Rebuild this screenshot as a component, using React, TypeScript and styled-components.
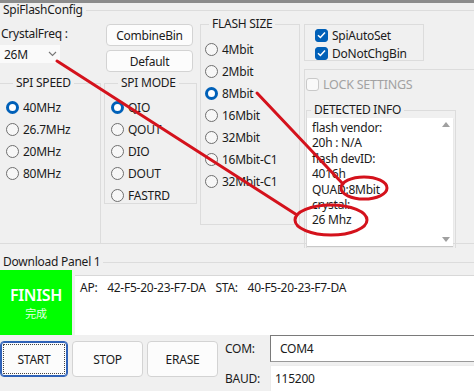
import React from "react";
import styled, { createGlobalStyle } from "styled-components";

const GlobalStyle = createGlobalStyle`
  html, body { margin: 0; padding: 0; background: #f0f0f0; }
  body { font-family: "Noto Sans", "Noto Sans CJK SC", sans-serif; }
`;

const Window = styled.div`
  position: relative;
  width: 474px;
  height: 391px;
  overflow: hidden;
  background: #f0f0f0;
  color: #1b1b1b;
  font-size: 12px;
  letter-spacing: -0.25px;
`;

const TopStrip = styled.div`
  height: 3px;
  background: #8c8c8c;
`;

const Group = styled.fieldset<{ $w?: number; $h?: number }>`
  box-sizing: border-box;
  margin: 0;
  padding: 0;
  min-width: 0;
  border: 1px solid #dcdcdc;
  ${(p) => (p.$w ? `width: ${p.$w}px;` : "")}
  ${(p) => (p.$h ? `height: ${p.$h}px;` : "")}
`;

const Legend = styled.legend<{ $indent?: number }>`
  padding: 0 3px;
  margin-left: ${(p) => p.$indent ?? 0}px;
  font-size: 12px;
  line-height: 14px;
  color: #1b1b1b;
`;

const ConfigGroup = styled(Group)`
  height: 241px;
  border-left: none;
  border-right: none;
`;

const ConfigBody = styled.div`
  display: flex;
`;

const LeftPane = styled.div`
  width: 200px;
  display: flex;
  flex-direction: column;
`;

const TopRow = styled.div`
  display: flex;
  height: 55px;
`;

const CrystalBlock = styled.div`
  width: 106px;
  padding-top: 9px;
`;

const FieldLabel = styled.div`
  line-height: 16px;
  padding-left: 1px;
`;

const Select = styled.div`
  margin-top: 3px;
  width: 60px;
  height: 18px;
  box-sizing: border-box;
  background: #fafafa;
  display: flex;
  align-items: center;
  justify-content: space-between;
  padding: 0 3px 0 4px;
`;

const ButtonStack = styled.div`
  padding-top: 7px;
  display: flex;
  flex-direction: column;
  gap: 4px;
`;

const Button = styled.button<{ $w: number; $h: number; $focus?: boolean }>`
  box-sizing: border-box;
  width: ${(p) => p.$w}px;
  height: ${(p) => p.$h}px;
  margin: 0;
  padding: 0;
  font-family: "Noto Sans", sans-serif;
  font-size: 12px;
  letter-spacing: -0.25px;
  color: #1b1b1b;
  background: #fcfcfc;
  border: 1px solid ${(p) => (p.$focus ? "#2f62b8" : "#d3d3d3")};
  border-radius: 4px;
  ${(p) =>
    p.$focus
      ? "outline: 1px dotted #444; outline-offset: -4px; box-shadow: inset 0 0 0 1px #2f62b8;"
      : ""}
`;

const GroupsRow = styled.div`
  display: flex;
  align-items: flex-start;
  margin-top: 4px;
  gap: 3px;
`;

const SpeedGroup = styled(Group)`
  border-left: none;
  border-bottom: none;
  height: 168px;
  padding: 6px 0 0 6px;
`;

const ModeGroup = styled(Group)`
  padding: 6px 0 0 6px;
`;

const FlashGroup = styled(Group)`
  padding: 7px 0 0 4px;
`;

const RadioRow = styled.div`
  display: flex;
  align-items: center;
  gap: 4px;
  height: 22px;
  white-space: nowrap;
`;

const RadioDot = styled.span<{ $on?: boolean }>`
  box-sizing: border-box;
  flex: none;
  width: 13px;
  height: 13px;
  border-radius: 50%;
  border: ${(p) => (p.$on ? "3.5px solid #0060b8" : "1px solid #6f6f6f")};
  background: ${(p) => (p.$on ? "#ffffff" : "#f7f7f7")};
`;

const RightPane = styled.div`
  flex: 1;
  margin-left: 4px;
  display: flex;
  flex-direction: column;
`;

const CheckGroup = styled.div`
  margin-top: 7px;
  width: 120px;
  height: 37px;
  box-sizing: border-box;
  border: 1px solid #dcdcdc;
  padding: 2px 0 0 10px;
  display: flex;
  flex-direction: column;
  gap: 2px;
`;

const CheckRow = styled.div<{ $disabled?: boolean }>`
  display: flex;
  align-items: center;
  gap: 4px;
  height: 16px;
  color: ${(p) => (p.$disabled ? "#a2a2a2" : "#1b1b1b")};
  font-size: ${(p) => (p.$disabled ? 12.5 : 12)}px;
`;

const CheckBox = styled.span<{ $on?: boolean }>`
  box-sizing: border-box;
  flex: none;
  width: 13px;
  height: 13px;
  border-radius: 3px;
  display: flex;
  align-items: center;
  justify-content: center;
  background: ${(p) => (p.$on ? "#0060b8" : "#f9f9f9")};
  border: 1px solid ${(p) => (p.$on ? "#0060b8" : "#c9c9c9")};
`;

const LockGroup = styled.div`
  margin-top: 8px;
  border-top: 1px solid #dcdcdc;
  border-left: 1px solid #dcdcdc;
  padding: 6px 0 0 1px;
  flex: 1;
`;

const DetectedGroup = styled(Group)`
  margin-top: 11px;
  width: 150px;
  height: 145px;
  border-bottom: none;
`;

const InfoBox = styled.div`
  position: relative;
  box-sizing: border-box;
  width: 146px;
  height: 128px;
  margin-top: 1px;
  background: #ffffff;
  box-shadow: 0 1px 1px #c8c8c8;
  padding: 2px 0 0 5px;
  line-height: 15.4px;
`;

const ScrollTrack = styled.div`
  position: absolute;
  right: 2px;
  top: 4px;
  bottom: 4px;
  width: 10px;
  display: flex;
  flex-direction: column;
  justify-content: space-between;
  align-items: center;
`;

const Arrow = styled.span<{ $down?: boolean }>`
  width: 0;
  height: 0;
  border-left: 4px solid transparent;
  border-right: 4px solid transparent;
  ${(p) => (p.$down ? "border-top: 5px solid #a0a0a0;" : "border-bottom: 5px solid #a0a0a0;")}
`;

const DownloadGroup = styled(Group)`
  margin-top: 11px;
  border-left: none;
  border-right: none;
  border-bottom: none;
  height: 140px;
`;

const StatusRow = styled.div`
  display: flex;
  align-items: flex-start;
  gap: 3px;
  margin-top: 1px;
`;

const FinishBox = styled.div`
  width: 72px;
  height: 65px;
  background: #00ff00;
  color: #ffffff;
  display: flex;
  flex-direction: column;
  align-items: center;
  justify-content: center;
`;

const FinishTitle = styled.div`
  font-size: 16px;
  font-weight: 600;
  line-height: 20px;
  letter-spacing: -0.3px;
`;

const FinishSub = styled.div`
  font-family: "Noto Sans CJK SC", sans-serif;
  font-size: 11px;
  line-height: 16px;
  opacity: 0.9;
`;

const LogBox = styled.div`
  flex: 1;
  box-sizing: border-box;
  height: 60px;
  margin-top: 5px;
  background: #ffffff;
  border-top: 1px solid #d8d8d8;
  padding: 3px 0 0 5px;
  word-spacing: 2px;
  white-space: pre;
`;

const ControlRow = styled.div`
  display: flex;
  align-items: flex-start;
  margin-top: 6px;
  gap: 4px;
`;

const PortGrid = styled.div`
  flex: 1;
  display: grid;
  grid-template-columns: 45px 1fr;
  margin-left: 3px;
  margin-top: -6px;
  row-gap: 3px;
`;

const PortLabel = styled.div`
  height: 27px;
  line-height: 27px;
`;

const PortField = styled.div<{ $flat?: boolean }>`
  box-sizing: border-box;
  height: 27px;
  line-height: 25px;
  padding-left: ${(p) => (p.$flat ? 4 : 9)}px;
  background: #ffffff;
  border: 1px solid ${(p) => (p.$flat ? "#ececec" : "#9a9a9a")};
  border-right: none;
  ${(p) => (p.$flat ? "" : "border-top-color: #7a7a7a; border-left-color: #7a7a7a;")}
`;

const Overlay = styled.svg`
  position: absolute;
  left: 0;
  top: 0;
  pointer-events: none;
`;

const speeds = ["40MHz", "26.7MHz", "20MHz", "80MHz"];
const modes = ["QIO", "QOUT", "DIO", "DOUT", "FASTRD"];
const sizes = ["4Mbit", "2Mbit", "8Mbit", "16Mbit", "32Mbit", "16Mbit-C1", "32Mbit-C1"];
const info = ["flash vendor:", "20h : N/A", "flash devID:", "4016h", "QUAD:8Mbit", "crystal:", "26 Mhz"];

const Tick = () => (
  <svg width="9" height="8" viewBox="0 0 9 8">
    <path d="M1 4.2 L3.4 6.5 L8 1.5" stroke="#fff" strokeWidth="1.5" fill="none" />
  </svg>
);

const RadioList = ({ items, selected }: { items: string[]; selected: string }) => (
  <>
    {items.map((t) => (
      <RadioRow key={t}>
        <RadioDot $on={t === selected} />
        {t}
      </RadioRow>
    ))}
  </>
);

export default function App() {
  return (
    <Window>
      <GlobalStyle />
      <TopStrip />
      <ConfigGroup>
        <Legend>SpiFlashConfig</Legend>
        <ConfigBody>
          <LeftPane>
            <TopRow>
              <CrystalBlock>
                <FieldLabel>CrystalFreq :</FieldLabel>
                <Select>
                  26M
                  <svg width="9" height="6" viewBox="0 0 9 6">
                    <path d="M1 1 L4.5 4.5 L8 1" stroke="#777" strokeWidth="1.1" fill="none" />
                  </svg>
                </Select>
              </CrystalBlock>
              <ButtonStack>
                <Button $w={87} $h={22}>CombineBin</Button>
                <Button $w={87} $h={22}>Default</Button>
              </ButtonStack>
            </TopRow>
            <GroupsRow>
              <SpeedGroup $w={101}>
                <Legend $indent={7}>SPI SPEED</Legend>
                <RadioList items={speeds} selected="40MHz" />
              </SpeedGroup>
              <ModeGroup $w={93} $h={128}>
                <Legend $indent={7}>SPI MODE</Legend>
                <RadioList items={modes} selected="QIO" />
              </ModeGroup>
            </GroupsRow>
          </LeftPane>
          <FlashGroup $w={100} $h={208}>
            <Legend $indent={4}>FLASH SIZE</Legend>
            <RadioList items={sizes} selected="8Mbit" />
          </FlashGroup>
          <RightPane>
            <CheckGroup>
              <CheckRow>
                <CheckBox $on>
                  <Tick />
                </CheckBox>
                SpiAutoSet
              </CheckRow>
              <CheckRow>
                <CheckBox $on>
                  <Tick />
                </CheckBox>
                DoNotChgBin
              </CheckRow>
            </CheckGroup>
            <LockGroup>
              <CheckRow $disabled>
                <CheckBox />
                LOCK SETTINGS
              </CheckRow>
              <DetectedGroup>
                <Legend $indent={4}>DETECTED INFO</Legend>
                <InfoBox>
                  {info.map((l) => (
                    <div key={l}>{l}</div>
                  ))}
                  <ScrollTrack>
                    <Arrow />
                    <Arrow $down />
                  </ScrollTrack>
                </InfoBox>
              </DetectedGroup>
            </LockGroup>
          </RightPane>
        </ConfigBody>
      </ConfigGroup>
      <DownloadGroup>
        <Legend>Download Panel 1</Legend>
        <StatusRow>
          <FinishBox>
            <FinishTitle>FINISH</FinishTitle>
            <FinishSub>完成</FinishSub>
          </FinishBox>
          <LogBox>{"AP:  42-F5-20-23-F7-DA  STA:  40-F5-20-23-F7-DA"}</LogBox>
        </StatusRow>
        <ControlRow>
          <Button $w={68} $h={36} $focus>START</Button>
          <Button $w={71} $h={36}>STOP</Button>
          <Button $w={71} $h={36}>ERASE</Button>
          <PortGrid>
            <PortLabel>COM:</PortLabel>
            <PortField>COM4</PortField>
            <PortLabel>BAUD:</PortLabel>
            <PortField $flat>115200</PortField>
          </PortGrid>
        </ControlRow>
      </DownloadGroup>
      <Overlay width="474" height="391" viewBox="0 0 474 391">
        <g stroke="#d4121c" strokeWidth="3" fill="none" strokeLinecap="round">
          <line x1="57" y1="61" x2="297" y2="215" />
          <line x1="257" y1="93" x2="343" y2="184" />
          <ellipse cx="331" cy="220" rx="36" ry="15" />
          <ellipse cx="364" cy="188" rx="23" ry="11" />
        </g>
      </Overlay>
    </Window>
  );
}
